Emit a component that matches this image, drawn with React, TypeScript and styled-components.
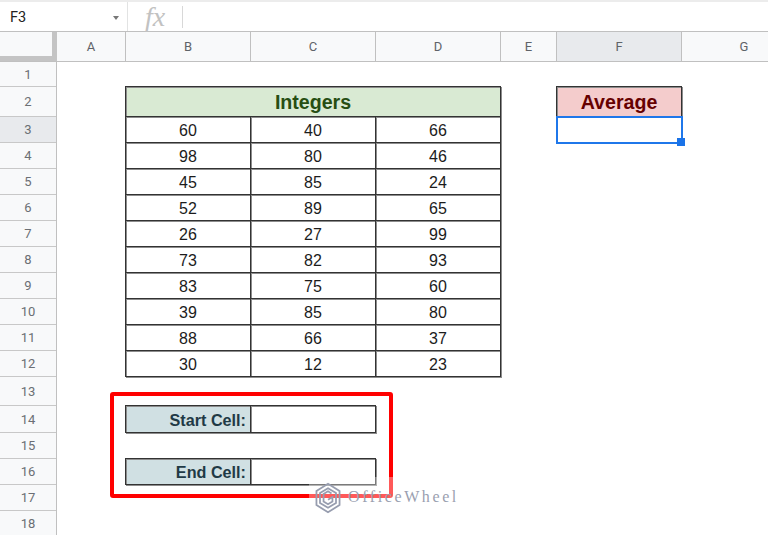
import React from 'react';
import styled, { createGlobalStyle } from 'styled-components';

const COLUMNS = [
	{ label: 'A', width: 69 },
	{ label: 'B', width: 125 },
	{ label: 'C', width: 125 },
	{ label: 'D', width: 125 },
	{ label: 'E', width: 56 },
	{ label: 'F', width: 125, active: true },
	{ label: 'G', width: 125 },
];

const ROW_HEIGHTS = [25, 30, 26, 26, 26, 26, 26, 26, 26, 26, 26, 26, 29, 27, 26, 26, 26, 26];

const INTEGERS = [
	[60, 40, 66],
	[98, 80, 46],
	[45, 85, 24],
	[52, 89, 65],
	[26, 27, 99],
	[73, 82, 93],
	[83, 75, 60],
	[39, 85, 80],
	[88, 66, 37],
	[30, 12, 23],
];

const GlobalStyle = createGlobalStyle`
	html, body {
		margin: 0;
		height: 100%;
		background: #fff;
		overflow: hidden;
	}
`;

const Page = styled.div`
	width: 768px;
	height: 535px;
	position: relative;
	overflow: hidden;
	font-family: 'Roboto', 'Liberation Sans', sans-serif;
	color: #222;
`;

const FormulaBar = styled.div`
	height: 29px;
	display: flex;
	align-items: center;
	border-top: 2px solid #ececec;
	background: #fff;
`;

const NameBox = styled.div`
	width: 128px;
	height: 100%;
	padding: 1px 8px 0 10px;
	box-sizing: border-box;
	display: flex;
	align-items: center;
	justify-content: space-between;
	font-size: 14.5px;
	border-right: 1px solid #e2e3e3;
`;

const Caret = styled.span`
	width: 0;
	height: 0;
	margin-top: 2px;
	border-left: 3.5px solid transparent;
	border-right: 3.5px solid transparent;
	border-top: 4px solid #777;
`;

const FxLabel = styled.span`
	width: 54px;
	height: 22px;
	display: flex;
	align-items: center;
	justify-content: center;
	font-family: 'Liberation Serif', serif;
	font-style: italic;
	font-size: 28px;
	color: #c2c2c2;
	border-right: 1px solid #d8d8d8;
`;

const HeaderRow = styled.div`
	display: flex;
	height: 29px;
	border-top: 1px solid #c0c0c0;
	border-bottom: 1px solid #c0c0c0;
	background: #f8f9fa;
`;

const CornerCell = styled.div`
	width: 57px;
	flex: none;
	box-shadow: inset -5px -5px 0 #c4c4c4;
`;

const ColumnHeader = styled.div<{ $width: number; $active?: boolean }>`
	width: ${(p) => p.$width}px;
	flex: none;
	box-sizing: border-box;
	display: flex;
	align-items: center;
	justify-content: center;
	font-size: 13px;
	color: #5f6368;
	border-right: 1px solid #c0c0c0;
	background: ${(p) => (p.$active ? '#e8eaed' : 'transparent')};
`;

const SheetBody = styled.div`
	display: flex;
`;

const RowHeaders = styled.div`
	width: 57px;
	flex: none;
	box-sizing: border-box;
	border-right: 1px solid #c0c0c0;
`;

const RowHeader = styled.div<{ $height: number; $active?: boolean }>`
	height: ${(p) => p.$height}px;
	box-sizing: border-box;
	display: flex;
	align-items: center;
	justify-content: center;
	font-size: 13px;
	color: #6b6f74;
	border-bottom: 1px solid #c8c8c8;
	background: ${(p) => (p.$active ? '#e8eaed' : '#f8f9fa')};
`;

const Canvas = styled.div`
	display: grid;
	grid-template-columns: ${COLUMNS.map((c) => `${c.width}px`).join(' ')};
	grid-template-rows: ${ROW_HEIGHTS.map((h) => `${h}px`).join(' ')};
`;

// dark pixel plus a mid grey one: the screenshot's lines are about 1.5px wide
const Cell = styled.div<{ $bg?: string; $color?: string; $header?: boolean; $right?: boolean }>`
	box-sizing: border-box;
	margin: -1px 0 0 -1px;
	border: 1px solid #333;
	box-shadow: inset 1px 1px 0 #8c8c8c, 1px 1px 0 #8c8c8c;
	display: flex;
	align-items: center;
	justify-content: ${(p) => (p.$right ? 'flex-end' : 'center')};
	padding: 2px ${(p) => (p.$right ? '4px' : '0')} 0 0;
	font-family: 'Liberation Sans', sans-serif;
	font-size: ${(p) => (p.$header ? '19.6px' : '16px')};
	font-weight: ${(p) => (p.$header ? 700 : 400)};
	background: ${(p) => p.$bg || '#fff'};
	color: ${(p) => p.$color || '#1c1c1c'};
`;

const LabelCell = styled(Cell)`
	font-size: 16.2px;
	font-weight: 700;
`;

const SelectedCell = styled.div`
	box-sizing: border-box;
	margin: -1px;
	border: 2px solid #1f77ea;
	position: relative;
	z-index: 1;
`;

const FillHandle = styled.span`
	position: absolute;
	right: -4px;
	bottom: -4px;
	width: 8px;
	height: 8px;
	background: #1a73e8;
`;

const Highlight = styled.div`
	position: absolute;
	left: 110px;
	top: 392px;
	width: 283px;
	height: 106px;
	box-sizing: border-box;
	border: 4px solid #ff0000;
	border-radius: 3px;
`;

const Watermark = styled.div`
	position: absolute;
	left: 309px;
	top: 477px;
	width: 150px;
	height: 30px;
	display: flex;
	align-items: flex-start;
	gap: 5px;
	padding: 5px 0 0 4px;
	box-sizing: border-box;
	background: rgba(255, 255, 255, 0.35);
`;

const Wordmark = styled.span`
	margin-top: 6px;
	font-family: 'Liberation Serif', serif;
	font-size: 16px;
	line-height: 18px;
	letter-spacing: 2.6px;
	color: #9aa0b0;
`;

const WheelLogo = () => (
	<svg width="30" height="32" viewBox="0 0 30 36" fill="none" stroke="#979daf" strokeWidth="2" style={{ flex: 'none' }}>
		<path d="M15 2 L28 10 V26 L15 34 L2 26 V10 Z" />
		<path d="M15 7 L24 12.5 V23.5 L15 29 L6 23.5 V12.5 Z" />
		<path d="M19 13 L15 10.5 L10 13.5 V22 L15 25 L20 22 V17 L15 20" />
	</svg>
);

const gridSpot = (col: number, row: number, span = 1) => ({
	gridColumn: `${col} / span ${span}`,
	gridRow: `${row}`,
});

export default function App() {
	return (
		<Page>
			<GlobalStyle />
			<FormulaBar>
				<NameBox>
					F3
					<Caret />
				</NameBox>
				<FxLabel>fx</FxLabel>
			</FormulaBar>
			<HeaderRow>
				<CornerCell />
				{COLUMNS.map((c) => (
					<ColumnHeader key={c.label} $width={c.width} $active={c.active}>
						{c.label}
					</ColumnHeader>
				))}
			</HeaderRow>
			<SheetBody>
				<RowHeaders>
					{ROW_HEIGHTS.map((h, i) => (
						<RowHeader key={i} $height={h} $active={i === 2}>
							{i + 1}
						</RowHeader>
					))}
				</RowHeaders>
				<Canvas>
					<Cell $header $bg="#d9ead3" $color="#274e13" style={gridSpot(2, 2, 3)}>
						Integers
					</Cell>
					<Cell $header $bg="#f4cccc" $color="#660000" style={gridSpot(6, 2)}>
						Average
					</Cell>
					<SelectedCell style={gridSpot(6, 3)}>
						<FillHandle />
					</SelectedCell>
					{INTEGERS.map((row, r) =>
						row.map((value, c) => (
							<Cell key={`${r}-${c}`} style={gridSpot(c + 2, r + 3)}>
								{value}
							</Cell>
						)),
					)}
					<LabelCell $right $bg="#d0e0e3" $color="#1f3a46" style={gridSpot(2, 14)}>
						Start Cell:
					</LabelCell>
					<Cell style={gridSpot(3, 14)} />
					<LabelCell $right $bg="#d0e0e3" $color="#1f3a46" style={gridSpot(2, 16)}>
						End Cell:
					</LabelCell>
					<Cell style={gridSpot(3, 16)} />
				</Canvas>
			</SheetBody>
			<Highlight />
			<Watermark>
				<WheelLogo />
				<Wordmark>OfficeWheel</Wordmark>
			</Watermark>
		</Page>
	);
}
